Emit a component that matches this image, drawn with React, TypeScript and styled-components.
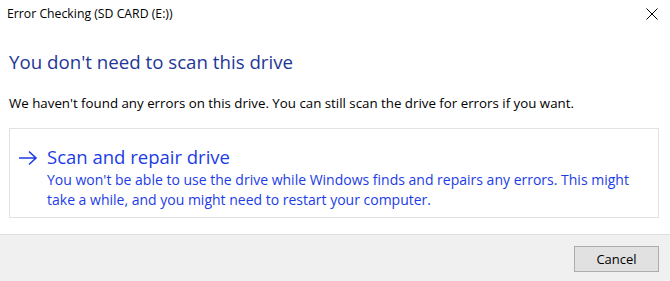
import React from "react";
import styled, { createGlobalStyle } from "styled-components";

const Global = createGlobalStyle`
  html, body { margin: 0; padding: 0; background: #ffffff; }
  body { font-family: "Segoe UI", "Open Sans", sans-serif; color: #000; }
  * { box-sizing: border-box; }
`;

const Dialog = styled.div`
  width: 670px;
  height: 281px;
  display: flex;
  flex-direction: column;
  background: #ffffff;
  overflow: hidden;
`;

const TitleBar = styled.div`
  height: 30px;
  display: flex;
  align-items: flex-start;
  justify-content: space-between;
  padding: 6px 12px 0 7px;
`;

const TitleText = styled.div`
  font-size: 12.25px;
  line-height: 16px;
  color: #000;
`;

const CloseButton = styled.div`
  width: 12px;
  height: 12px;
  margin-top: 2px;
  display: flex;
`;

const Content = styled.div`
  flex: 1;
  display: flex;
  flex-direction: column;
  padding: 19px 11px 0 9px;
`;

const Heading = styled.h1`
  margin: 0;
  font-weight: 400;
  font-size: 18.7px;
  line-height: 26px;
  color: #1f3796;
`;

const Message = styled.p`
  margin: 19px 0 0 0;
  font-size: 13.3px;
  line-height: 18px;
  color: #000;
`;

const OptionBox = styled.div`
  margin-top: 16px;
  height: 90px;
  border: 1px solid #e3e3e3;
  display: flex;
  align-items: flex-start;
  padding: 14px 10px 0 8px;
  gap: 9px;
`;

const Arrow = styled.svg`
  width: 20px;
  height: 16px;
  margin-top: 7px;
  flex: none;
`;

const OptionText = styled.div`
  display: flex;
  flex-direction: column;
`;

const OptionTitle = styled.div`
  font-size: 18.5px;
  line-height: 27px;
  color: #1c3ce6;
`;

const OptionDesc = styled.div`
  font-size: 14px;
  line-height: 20px;
  color: #1c3ce6;
  white-space: nowrap;
`;

const Footer = styled.div`
  height: 47px;
  border-top: 1px solid #dfdfdf;
  background: #f0f0f0;
  display: flex;
  justify-content: flex-end;
  align-items: flex-start;
  padding: 11px 11px 0 0;
`;

const Button = styled.button`
  width: 85px;
  height: 26px;
  border: 1px solid #adadad;
  background: #e1e1e1;
  font-family: inherit;
  font-size: 13px;
  color: #000;
  padding: 0;
`;

export default function App() {
  return (
    <Dialog>
      <Global />
      <TitleBar>
        <TitleText>Error Checking (SD CARD (E:))</TitleText>
        <CloseButton>
          <svg width="12" height="12" viewBox="0 0 12 12">
            <path d="M0.5 0.5 L11.5 11.5 M11.5 0.5 L0.5 11.5" stroke="#000" strokeWidth="1" fill="none" />
          </svg>
        </CloseButton>
      </TitleBar>
      <Content>
        <Heading>You don't need to scan this drive</Heading>
        <Message>We haven't found any errors on this drive. You can still scan the drive for errors if you want.</Message>
        <OptionBox>
          <Arrow viewBox="0 0 20 16">
            <path d="M1 8 H18 M11 1.5 L18 8 L11 14.5" stroke="#1c3ce6" strokeWidth="1.6" fill="none" />
          </Arrow>
          <OptionText>
            <OptionTitle>Scan and repair drive</OptionTitle>
            <OptionDesc>
              You won't be able to use the drive while Windows finds and repairs any errors. This might
              <br />
              take a while, and you might need to restart your computer.
            </OptionDesc>
          </OptionText>
        </OptionBox>
      </Content>
      <Footer>
        <Button>Cancel</Button>
      </Footer>
    </Dialog>
  );
}
